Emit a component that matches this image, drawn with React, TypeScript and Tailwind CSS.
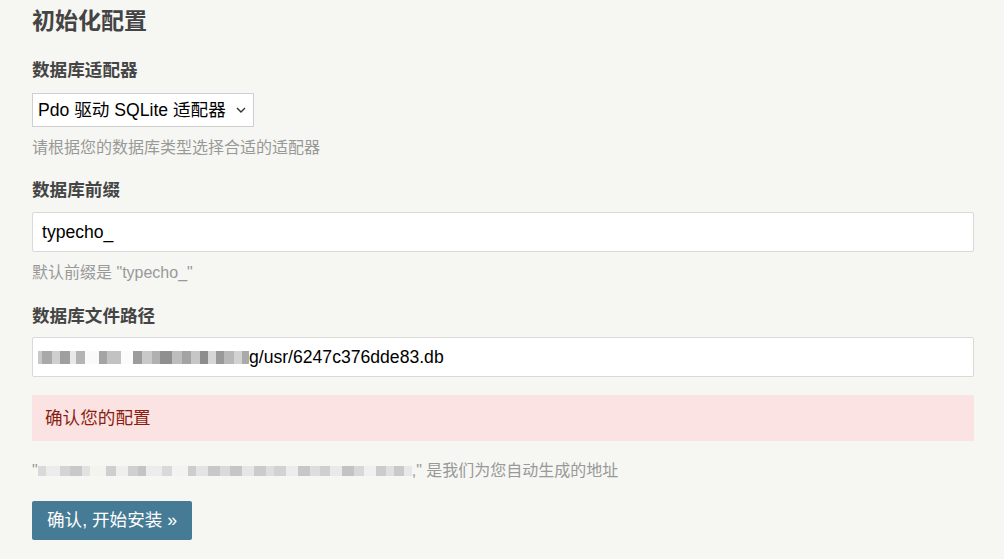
import React from 'react';

const font = { fontFamily: '"Liberation Sans", "Noto Sans CJK SC", sans-serif' };

// pixelated blocks standing in for the blurred path
const pathBlocks: [number, string][] = [
  [4, '#c8c8c8'], [10, '#a9a9a9'], [8, '#cfcfcf'], [10, '#9f9f9f'], [6, '#e8e8e8'], [9, '#b4b4b4'],
  [14, '#fafafa'], [8, '#a4a4a4'], [14, '#c2c2c2'], [12, '#fbfbfb'], [9, '#9c9c9c'], [10, '#c9c9c9'],
  [8, '#b0b0b0'], [12, '#8f8f8f'], [10, '#bdbdbd'], [9, '#a3a3a3'], [9, '#c6c6c6'], [8, '#8d8d8d'],
  [8, '#d6d6d6'], [8, '#999999'], [10, '#b8b8b8'], [8, '#d2d2d2'], [7, '#aaaaaa'],
];

// pixelated blocks standing in for the blurred site address
const descBlocks: [number, string][] = [
  [8, '#d9d9d9'], [14, '#ececec'], [10, '#d4d4d4'], [12, '#c9c9c9'], [8, '#e2e2e2'], [16, '#f3f3f0'],
  [10, '#cfcfcf'], [12, '#efefec'], [10, '#d0d0d0'], [8, '#c4c4c4'], [16, '#ececec'], [10, '#d9d9d9'],
  [16, '#f3f3f0'], [8, '#cdcdcd'], [12, '#e4e4e4'], [12, '#c8c8c8'], [10, '#dadada'], [12, '#c6c6c6'],
  [12, '#e6e6e6'], [12, '#cbcbcb'], [8, '#dedede'], [12, '#d2d2d2'], [12, '#ececec'], [12, '#c7c7c7'],
  [10, '#dddddd'], [10, '#cfcfcf'], [12, '#e9e9e9'], [12, '#c3c3c3'], [10, '#d8d8d8'], [12, '#f0f0ee'],
  [10, '#cccccc'], [8, '#e0e0e0'], [10, '#c9c9c9'], [8, '#e8e8e8'],
];

function Pixels({ blocks, h }: { blocks: [number, string][]; h: number }) {
  return (
    <span className="inline-flex items-center align-middle">
      {blocks.map(([w, c], i) => (
        <span key={i} className="inline-block" style={{ width: w, height: h, background: c }} />
      ))}
    </span>
  );
}

export default function App() {
  return (
    <div className="min-h-screen bg-[#f6f6f3] pl-8 pr-[30px] pt-[5px] text-[#444]" style={font}>
      <h1 className="text-[23px] font-bold leading-[32px]">初始化配置</h1>

      <div className="mt-[21px] text-[17.6px] font-bold leading-[24px]">数据库适配器</div>
      <div className="mt-[11px] flex h-[34px] w-[222px] items-center justify-between border border-[#cfcfcf] bg-white pl-[5px] pr-[7px] text-[17.6px] text-black">
        <span>Pdo 驱动 SQLite 适配器</span>
        <svg width="10" height="6" viewBox="0 0 10 6" fill="none">
          <path d="M1 1l4 4 4-4" stroke="#333" strokeWidth="1.4" />
        </svg>
      </div>
      <p className="mt-[11px] text-base leading-[20px] text-[#999]">请根据您的数据库类型选择合适的适配器</p>

      <div className="mt-[20px] text-[17.6px] font-bold leading-[24px]">数据库前缀</div>
      <div className="mt-[10px] flex h-[40px] items-center rounded-[2px] border border-[#d9d9d6] bg-white px-[9px] text-[17.6px] text-black">
        typecho_
      </div>
      <p className="mt-[11px] text-base leading-[20px] text-[#999]">默认前缀是 "typecho_"</p>

      <div className="mt-[21px] text-[17.6px] font-bold leading-[24px]">数据库文件路径</div>
      <div className="mt-[9px] flex h-[40px] items-center rounded-[2px] border border-[#d9d9d6] bg-white px-[5px] text-[17.6px] text-black">
        <Pixels blocks={pathBlocks} h={13} />
        <span>g/usr/6247c376dde83.db</span>
      </div>

      <div className="mt-[18px] flex h-[46px] items-center bg-[#fbe3e4] px-[13px] text-[17.6px] text-[#8a1f11]">
        确认您的配置
      </div>

      <p className="mt-[20px] flex items-center text-base leading-[20px] text-[#999]">
        <span>"</span>
        <Pixels blocks={descBlocks} h={10} />
        <span>," 是我们为您自动生成的地址</span>
      </p>

      <button className="mt-[20px] flex h-[39px] items-center rounded-[2px] bg-[#467b96] px-[15px] text-[17.6px] text-white">
        确认, 开始安装 »
      </button>
    </div>
  );
}
